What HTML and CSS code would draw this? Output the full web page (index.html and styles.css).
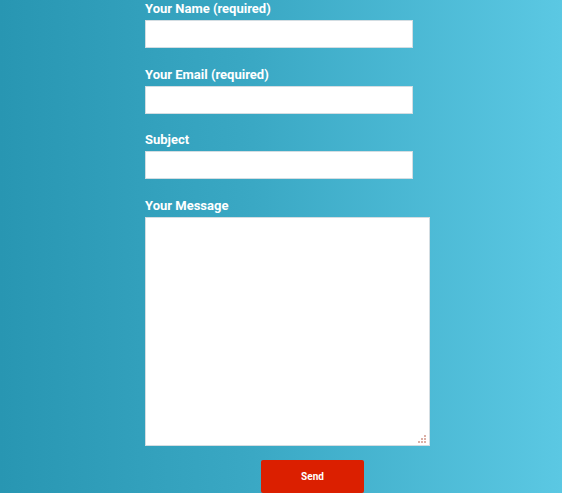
FILE: index.html
```html
<!DOCTYPE html>
<html>
<head>
<meta charset="utf-8">
<link rel="stylesheet" href="styles.css">
</head>
<body>
<form class="contact">
  <div class="field">
    <label class="label">Your Name (required)</label>
    <input class="input" type="text">
  </div>
  <div class="field field-shift">
    <label class="label">Your Email (required)</label>
    <input class="input" type="text">
  </div>
  <div class="field">
    <label class="label">Subject</label>
    <input class="input" type="text">
  </div>
  <div class="field field-shift">
    <label class="label">Your Message</label>
    <div class="area-wrap">
      <textarea class="area"></textarea>
      <svg class="grip" width="8" height="8" viewBox="0 0 8 8">
        <rect x="6" y="0" width="2" height="2"/>
        <rect x="3" y="3" width="2" height="2"/>
        <rect x="6" y="3" width="2" height="2"/>
        <rect x="0" y="6" width="2" height="2"/>
        <rect x="3" y="6" width="2" height="2"/>
        <rect x="6" y="6" width="2" height="2"/>
      </svg>
    </div>
  </div>
  <div class="actions">
    <button class="send" type="button">Send</button>
  </div>
</form>
</body>
</html>
```
FILE: styles.css
```css
html, body {
  margin: 0;
  padding: 0;
  height: 100%;
}
body {
  background: linear-gradient(90deg, #2896b2 0%, #3aa8c4 45%, #5bc8e3 100%);
  font-family: Roboto, "Liberation Sans", sans-serif;
  overflow: hidden;
}
.contact {
  padding: 1px 0 0 145px;
  display: flex;
  flex-direction: column;
  gap: 18px;
}
.field {
  display: flex;
  flex-direction: column;
  gap: 3px;
}
.field-shift {
  margin-top: 1px;
}
.label {
  color: #fff;
  font-weight: 700;
  font-size: 13px;
  line-height: 16px;
}
.input {
  box-sizing: border-box;
  width: 268px;
  height: 28px;
  margin: 0;
  border: 1px solid #d3dde2;
  background: #fff;
  padding: 0 6px;
  outline: none;
}
.area-wrap {
  position: relative;
  width: 285px;
  height: 229px;
}
.area {
  box-sizing: border-box;
  display: block;
  width: 285px;
  height: 229px;
  margin: 0;
  border: 1px solid #d3dde2;
  background: #fff;
  resize: none;
  outline: none;
}
.grip {
  position: absolute;
  right: 4px;
  bottom: 3px;
  fill: #dcb0a6;
}
.actions {
  margin-top: -4px;
  padding-left: 116px;
}
.send {
  width: 103px;
  height: 33px;
  border: none;
  border-radius: 2px;
  background: #db1f00;
  color: #fff;
  font-family: Roboto, "Liberation Sans", sans-serif;
  font-weight: 700;
  font-size: 10px;
  padding: 0;
}
```
